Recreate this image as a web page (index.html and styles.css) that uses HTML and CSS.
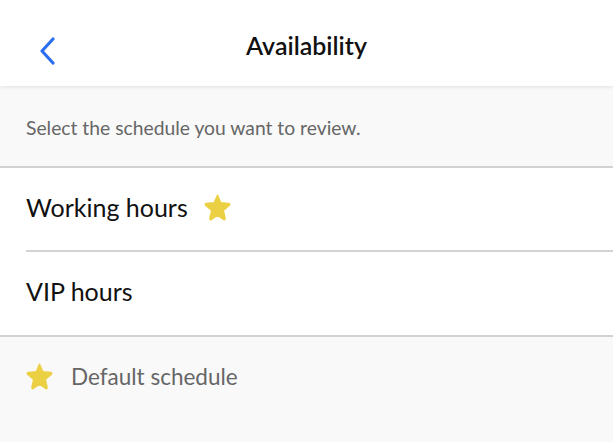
FILE: index.html
```html
<!DOCTYPE html>
<html>
<head>
<meta charset="utf-8">
<link rel="stylesheet" href="styles.css">
</head>
<body>
<div class="app">
  <header class="topbar">
    <button class="back" aria-label="Back">
      <svg width="18" height="28" viewBox="0 0 18 28"><path d="M15 2 L4 14 L15 26" fill="none" stroke="#2d6ef0" stroke-width="3.2" stroke-linecap="round" stroke-linejoin="round"/></svg>
    </button>
    <h1 class="title">Availability</h1>
  </header>
  <div class="intro">Select the schedule you want to review.</div>
  <ul class="list">
    <li class="row"><span class="row-label">Working hours</span><svg class="star" width="31" height="30" viewBox="0 0 24 24"><path d="M12 2.6 L14.6 8.6 L21 9.2 C21.7 9.3 22 10.1 21.5 10.6 L16.6 14.8 L18.1 21.1 C18.3 21.8 17.5 22.3 16.9 22 L12 18.6 L7.1 22 C6.5 22.3 5.7 21.8 5.9 21.1 L7.4 14.8 L2.5 10.6 C2 10.1 2.3 9.3 3 9.2 L9.4 8.6 Z" fill="#ecd044" stroke="#ecd044" stroke-width="1.2" stroke-linejoin="round"/></svg></li>
    <li class="row"><span class="row-label">VIP hours</span></li>
  </ul>
  <div class="legend"><svg class="star" width="31" height="30" viewBox="0 0 24 24"><path d="M12 2.6 L14.6 8.6 L21 9.2 C21.7 9.3 22 10.1 21.5 10.6 L16.6 14.8 L18.1 21.1 C18.3 21.8 17.5 22.3 16.9 22 L12 18.6 L7.1 22 C6.5 22.3 5.7 21.8 5.9 21.1 L7.4 14.8 L2.5 10.6 C2 10.1 2.3 9.3 3 9.2 L9.4 8.6 Z" fill="#ecd044" stroke="#ecd044" stroke-width="1.2" stroke-linejoin="round"/></svg><span>Default schedule</span></div>
</div>
</body>
</html>
```
FILE: styles.css
```css
* { box-sizing: border-box; }
html, body { margin: 0; padding: 0; height: 100%; }
body { font-family: Lato, "Open Sans", sans-serif; background: #f9f9f9; }
.app { display: flex; flex-direction: column; height: 100%; }
.topbar {
  height: 86px; flex: none; background: #fff; display: flex; align-items: center; justify-content: center;
  position: relative; box-shadow: 0 1px 4px rgba(0,0,0,0.10); z-index: 1;
}
.back {
  position: absolute; left: 36px; top: 36px; border: 0; background: none; padding: 0; margin: 0; width: 22px; height: 30px;
  display: flex; align-items: center; justify-content: center;
}
.title { margin: 0; font-size: 25px; font-weight: 600; color: #111; letter-spacing: 0; padding-top: 4px; }
.intro { height: 80px; flex: none; display: flex; align-items: center; padding-left: 26px; padding-top: 2px; font-size: 19.3px; color: #666; background: #f9f9f9; }
.list { list-style: none; margin: 0; padding: 0; background: #fff; border-top: 2px solid #d2d2d2; border-bottom: 2px solid #d2d2d2; }
.row { height: 82px; margin-left: 26px; display: flex; align-items: center; gap: 14px; font-size: 25px; color: #111; padding-bottom: 5px; }
.row + .row { border-top: 2px solid #d2d2d2; height: 85px; }
.row .star { margin-top: 0; }
.legend { display: flex; align-items: center; gap: 16px; padding-left: 24px; height: 80px; font-size: 22.5px; color: #666; padding-bottom: 2px; }
```
